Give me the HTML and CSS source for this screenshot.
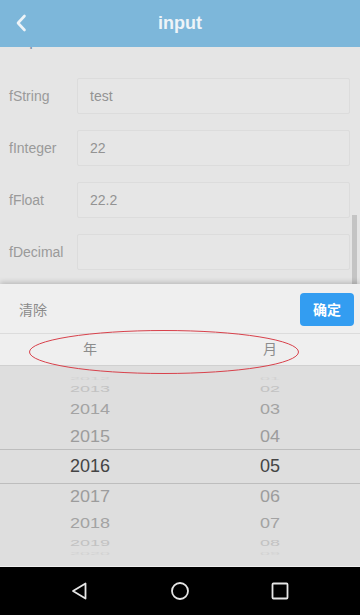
FILE: index.html
```html
<!DOCTYPE html>
<html lang="zh">
<head>
<meta charset="utf-8">
<meta name="viewport" content="width=360">
<title>input</title>
<link rel="stylesheet" href="styles.css">
</head>
<body>
<div class="page">
  <div class="screen">
    <div class="form">
      <div class="section-title">Input</div>
      <div class="row"><label class="label">fString</label><div class="field">test</div></div>
      <div class="row"><label class="label">fInteger</label><div class="field">22</div></div>
      <div class="row"><label class="label">fFloat</label><div class="field">22.2</div></div>
      <div class="row"><label class="label">fDecimal</label><div class="field"></div></div>
    </div>
    <div class="scrollbar"></div>

    <header class="topbar">
      <svg class="back" width="12" height="18" viewBox="0 0 12 18"><path d="M9.5 2 L3 9 L9.5 16" fill="none" stroke="#eef4f8" stroke-width="2.6" stroke-linecap="round" stroke-linejoin="round"/></svg>
      <h1 class="title">input</h1>
    </header>

    <div class="picker">
      <div class="toolbar">
        <span class="clear">清除</span>
        <button class="ok">确定</button>
      </div>
      <div class="cols-head">
        <div class="col-title">年</div>
        <div class="col-title">月</div>
      </div>
      <div class="wheels">
        <div class="wheel">
          <div class="item i4">2012</div>
          <div class="item i3">2013</div>
          <div class="item i2">2014</div>
          <div class="item i1">2015</div>
          <div class="item sel">2016</div>
          <div class="item i1">2017</div>
          <div class="item i2">2018</div>
          <div class="item i3">2019</div>
          <div class="item i4">2020</div>
        </div>
        <div class="wheel">
          <div class="item i4">01</div>
          <div class="item i3">02</div>
          <div class="item i2">03</div>
          <div class="item i1">04</div>
          <div class="item sel">05</div>
          <div class="item i1">06</div>
          <div class="item i2">07</div>
          <div class="item i3">08</div>
          <div class="item i4">09</div>
        </div>
      </div>
      <svg class="mark" width="274" height="48" viewBox="0 0 274 48"><ellipse cx="137" cy="24" rx="134.5" ry="21.5" fill="none" stroke="#d8414b" stroke-width="1"/></svg>
    </div>
  </div>

  <nav class="navbar">
    <svg class="nav-ico" width="20" height="20" viewBox="0 0 20 20"><path d="M15.5 2.5 L15.5 17.5 L3 10 Z" fill="none" stroke="#e6e6e6" stroke-width="1.8" stroke-linejoin="round"/></svg>
    <svg class="nav-ico" width="20" height="20" viewBox="0 0 20 20"><circle cx="10" cy="10" r="8" fill="none" stroke="#e6e6e6" stroke-width="1.8"/></svg>
    <svg class="nav-ico" width="20" height="20" viewBox="0 0 20 20"><rect x="2.5" y="2.5" width="15" height="15" rx="1" fill="none" stroke="#e6e6e6" stroke-width="1.8"/></svg>
  </nav>
</div>
</body>
</html>
```
FILE: styles.css
```css
* { box-sizing: border-box; }
html, body { margin: 0; padding: 0; }
body {
  width: 360px;
  height: 615px;
  overflow: hidden;
  font-family: "Liberation Sans", Arial, "Noto Sans CJK SC", sans-serif;
  background: #000;
}
.page {
  width: 360px;
  height: 615px;
  display: flex;
  flex-direction: column;
}
.screen {
  position: relative;
  height: 567px;
  overflow: hidden;
  background: #e5e5e5;
}

/* form */
.form {
  padding-top: 31px;
}
.section-title {
  font-size: 16px;
  line-height: 20px;
  height: 20px;
  padding-left: 16px;
  color: #7d8fa4;
  margin-bottom: 27px;
}
.row {
  display: flex;
  align-items: center;
  height: 36px;
  margin-bottom: 16px;
  padding-right: 10px;
}
.label {
  width: 77px;
  padding-left: 9px;
  font-size: 14px;
  color: #9a9a9a;
}
.field {
  flex: 1;
  height: 36px;
  border: 1px solid #dcdcdc;
  border-radius: 2px;
  background: #e6e6e6;
  padding-left: 12px;
  font-size: 14px;
  line-height: 34px;
  color: #939393;
}
.scrollbar {
  position: absolute;
  right: 3px;
  top: 215px;
  width: 5px;
  height: 70px;
  background: #c4c4c4;
}

/* header */
.topbar {
  position: absolute;
  top: 0;
  left: 0;
  right: 0;
  height: 47px;
  background: #7db7da;
  display: flex;
  align-items: center;
  justify-content: center;
}
.back {
  position: absolute;
  left: 15px;
  top: 14px;
}
.title {
  margin: 0;
  font-size: 18px;
  font-weight: bold;
  color: #eef4f8;
}

/* picker */
.picker {
  position: absolute;
  left: 0;
  right: 0;
  bottom: 0;
  height: 283px;
  background: #efefef;
  box-shadow: 0 -2px 5px rgba(0, 0, 0, 0.18);
}
.toolbar {
  height: 50px;
  display: flex;
  align-items: center;
  justify-content: space-between;
  padding: 0 6px 0 19px;
  border-bottom: 1px solid #dcdcdc;
}
.clear {
  font-size: 14px;
  color: #8a8a8a;
  padding-top: 1px;
}
.ok {
  width: 54px;
  height: 33px;
  border: none;
  border-radius: 4px;
  background: #339df1;
  color: #fff;
  font-family: inherit;
  font-size: 14px;
  font-weight: bold;
  margin-top: 1px;
}
.cols-head {
  height: 32px;
  display: flex;
  border-bottom: 1px solid #d0d0d0;
}
.col-title {
  flex: 1;
  text-align: center;
  font-size: 14px;
  line-height: 31px;
  color: #8c8c8c;
}
.wheels {
  height: 200px;
  display: flex;
  background: #dedede;
  overflow: hidden;
}
.wheel {
  flex: 1;
  display: flex;
  flex-direction: column;
  justify-content: center;
  align-items: stretch;
}
.item {
  text-align: center;
  font-size: 18px;
  color: #9c9c9c;
  display: flex;
  align-items: center;
  justify-content: center;
  flex: none;
}
.sel {
  height: 35px;
  color: #444;
  border-top: 1px solid #bdbdbd;
  border-bottom: 1px solid #bdbdbd;
}
.i1 { height: 25px; transform: scaleY(0.95); }
.i2 { height: 29px; transform: scaleY(0.8); color: #a3a3a3; }
.i3 { height: 11px; transform: scaleY(0.5); color: #c2c2c2; }
.i4 { height: 10px; transform: scaleY(0.2); color: #d2d2d2; }
.mark {
  position: absolute;
  left: 27px;
  top: 44px;
}

/* nav */
.navbar {
  height: 48px;
  background: #000;
  display: flex;
  align-items: center;
  justify-content: center;
  gap: 80px;
}
.nav-ico { display: block; }
```
